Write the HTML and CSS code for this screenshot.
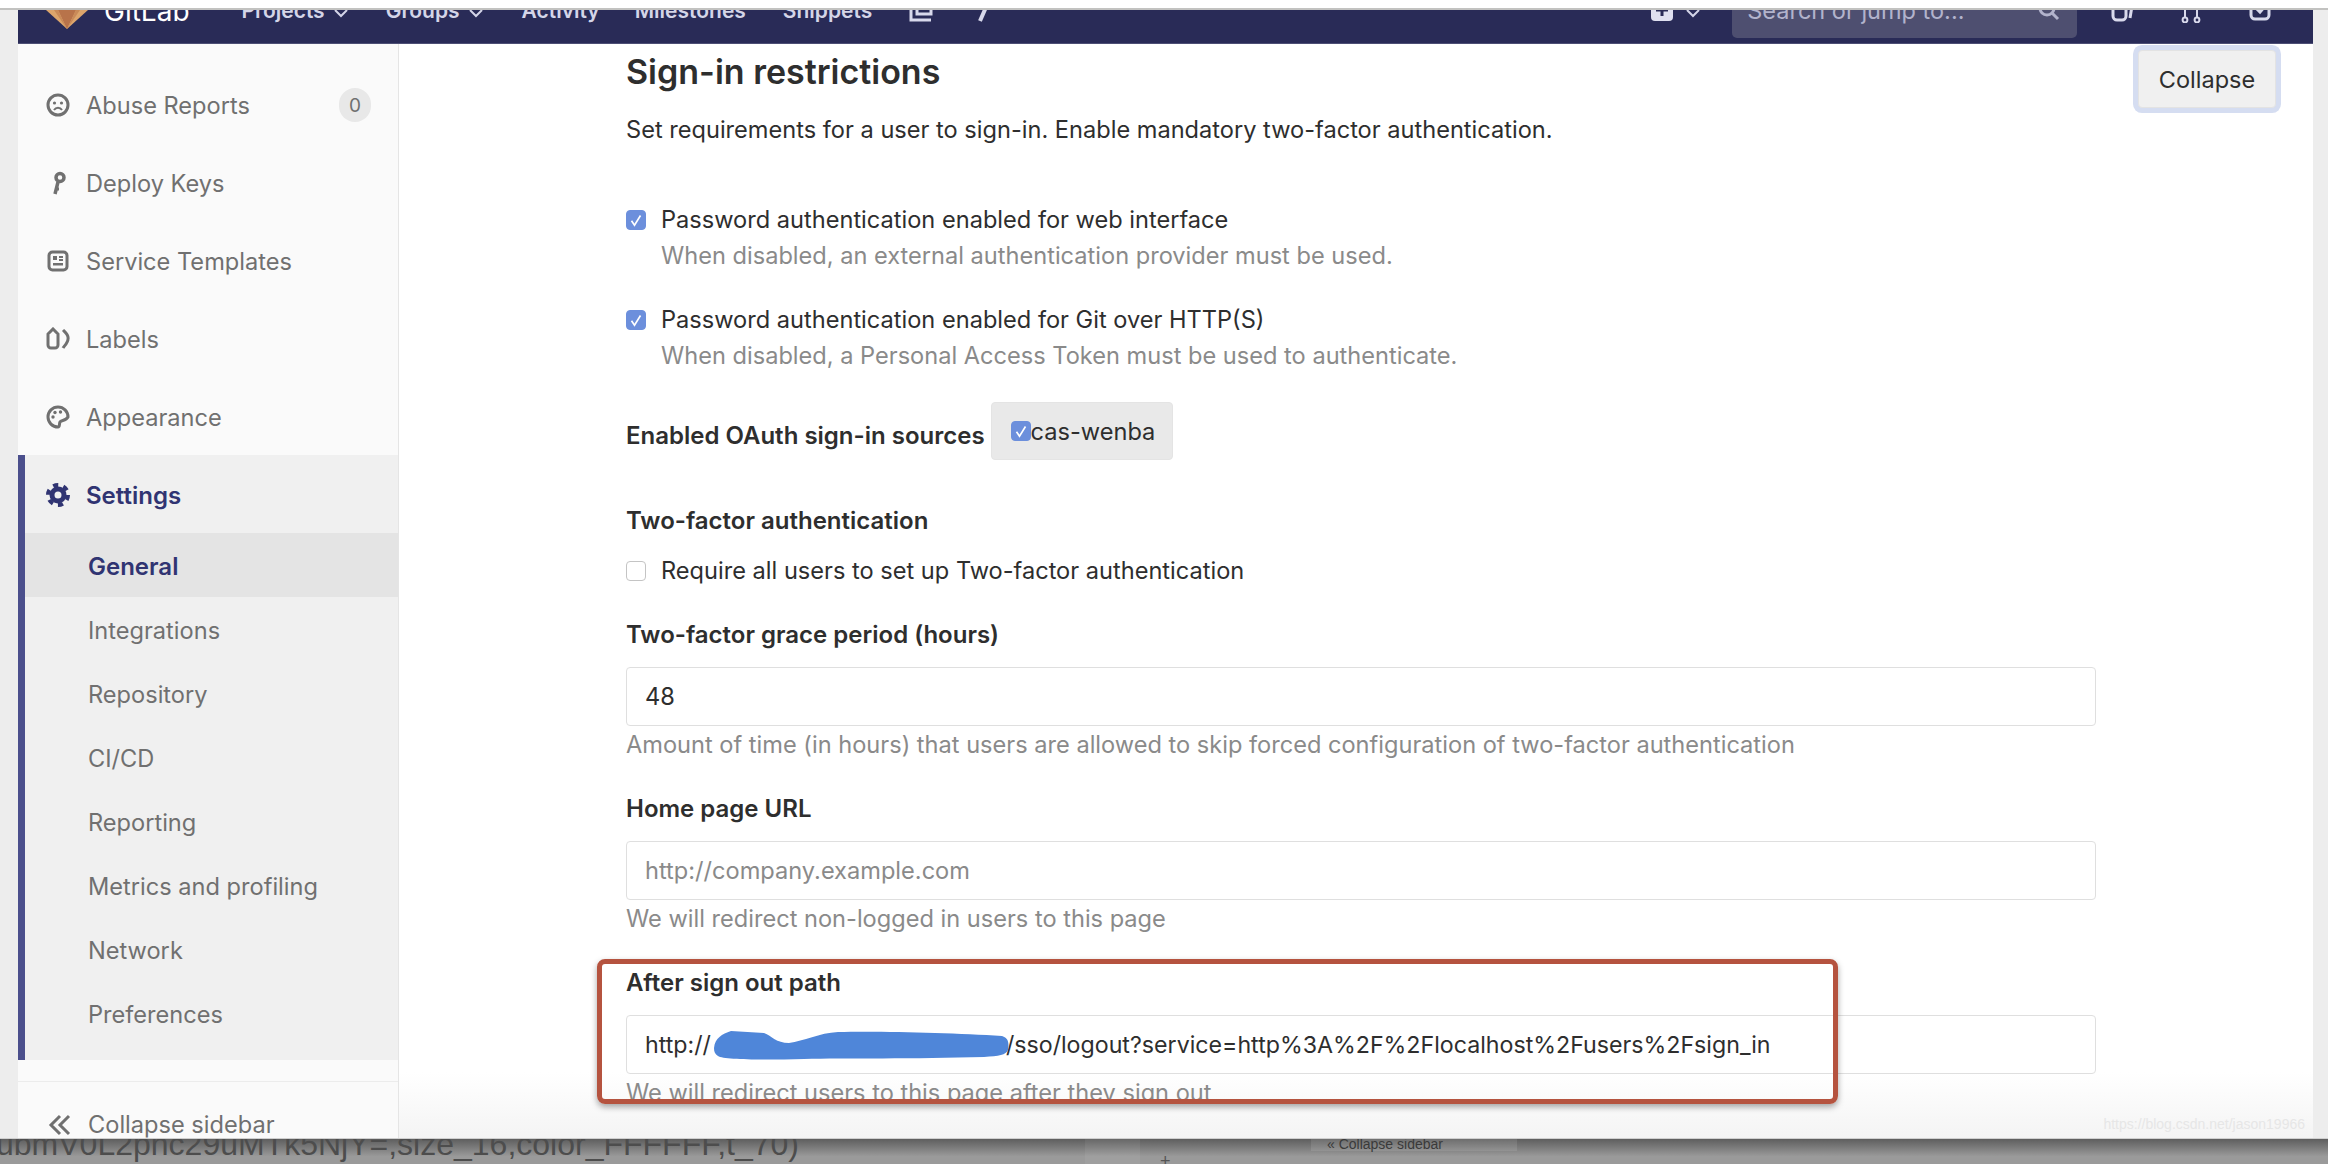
FILE: index.html
```html
<!DOCTYPE html>
<html lang="en">
<head>
    <meta charset="UTF-8">
    <title>Settings · Admin Area · GitLab</title>
    <link rel="stylesheet" href="styles.css">
</head>
<body>
    <div class="top-edge"></div>

    <div class="window">
        <nav class="navbar">
            <div class="nav-inner">
                <svg class="logo" viewBox="0 0 42 58"><path fill="#dca56c" d="M0 39 21 58 42 39V20H0z"/><path fill="#b8734a" d="M12 39 21 58 30 39V20H12z"/><path fill="#c98a58" d="M8 39 21 58 12 39V20H8zM34 39 21 58 30 39V20h4z"/></svg>
                <span class="brand">GitLab</span>
                <a class="nav-link projects">Projects <svg class="chev" viewBox="0 0 16 10"><path d="M2 2l6 6 6-6"/></svg></a>
                <a class="nav-link groups">Groups <svg class="chev" viewBox="0 0 16 10"><path d="M2 2l6 6 6-6"/></svg></a>
                <a class="nav-link activity">Activity</a>
                <a class="nav-link milestones">Milestones</a>
                <a class="nav-link snippets">Snippets</a>
                <svg class="nav-icon chart" viewBox="0 0 24 24"><path d="M2 2v20h20M8 2v14h14V2"/></svg>
                <svg class="nav-icon wrench" viewBox="0 0 16 28"><path d="M13 2 3 25"/></svg>
                <svg class="nav-icon plus" viewBox="0 0 22 22"><rect width="22" height="22" rx="4" fill="#dfe0f0" stroke="none"/><path stroke="#292b57" d="M11 5v12M5 11h12"/></svg>
                <svg class="chev chev-plus" viewBox="0 0 16 10"><path d="M2 2l6 6 6-6"/></svg>
                <div class="search">
                    <span>Search or jump to...</span>
                    <svg class="search-icon" viewBox="0 0 22 22"><circle cx="9" cy="9" r="7"/><path d="M14 14l6 6"/></svg>
                </div>
                <svg class="nav-icon issues" viewBox="0 0 24 24"><path d="M3 2v16a4 4 0 0 0 4 4h5a4 4 0 0 0 4-4V2M20 20l3-18"/></svg>
                <svg class="nav-icon merge" viewBox="0 0 20 26"><path d="M4 2v18M16 2v18"/><circle cx="4" cy="23" r="2.4"/><circle cx="16" cy="23" r="2.4"/></svg>
                <svg class="nav-icon todo" viewBox="0 0 22 22"><path d="M2 2v14a4 4 0 0 0 4 4h10a4 4 0 0 0 4-4V2M7 9l4 4 7-8"/></svg>
            </div>
        </nav>

        <div class="layout">
            <aside class="sidebar">
                <ul class="side-list">
                    <li class="side-item">
                        <svg class="side-icon" viewBox="0 0 24 24"><circle cx="12" cy="12" r="10" fill="none" stroke="#707070" stroke-width="3"/><circle cx="8.5" cy="10" r="1.6"/><circle cx="15.5" cy="10" r="1.6"/><path d="M8 17c2-3 6-3 8 0" fill="none" stroke="#707070" stroke-width="2"/></svg>
                        Abuse Reports
                        <span class="badge">0</span>
                    </li>
                    <li class="side-item">
                        <svg class="side-icon" viewBox="0 0 24 24"><path fill="none" stroke="#707070" stroke-width="3.5" d="M9 23l3-12"/><path fill="none" stroke="#707070" stroke-width="3" d="M9 18h4"/><circle cx="14" cy="6.5" r="4" fill="none" stroke="#707070" stroke-width="3.5"/></svg>
                        Deploy Keys
                    </li>
                    <li class="side-item">
                        <svg class="side-icon" viewBox="0 0 24 24"><rect x="3" y="3" width="18" height="18" rx="3.5" fill="none" stroke="#707070" stroke-width="3"/><rect x="7" y="7" width="4" height="4"/><rect x="13" y="7" width="4" height="2"/><rect x="13" y="10" width="4" height="2"/><rect x="7" y="14" width="10" height="2.5"/></svg>
                        Service Templates
                    </li>
                    <li class="side-item">
                        <svg class="side-icon" viewBox="0 0 24 24"><path fill="none" stroke="#707070" stroke-width="3" d="M2 7l5-5 5 5v11a3 3 0 0 1-3 3H5a3 3 0 0 1-3-3zM17 3c2 2 6 5 5 9 0 4-4 7-5 9"/></svg>
                        Labels
                    </li>
                    <li class="side-item">
                        <svg class="side-icon" viewBox="0 0 24 24"><path fill="none" stroke="#707070" stroke-width="3" d="M22 12A10 10 0 1 0 12 22c2 0 1-3 2-5s6-1 8-5z"/><circle cx="7" cy="12" r="1.7"/><circle cx="9" cy="7.5" r="1.7"/><circle cx="14.5" cy="7" r="1.7"/></svg>
                        Appearance
                    </li>
                </ul>
                <div class="side-active">
                    <div class="side-item side-head">
                        <svg class="side-icon gear" viewBox="0 0 24 24"><circle cx="12" cy="12" r="6" fill="none" stroke="#303472" stroke-width="5"/><circle cx="12" cy="12" r="10" fill="none" stroke="#303472" stroke-width="4" stroke-dasharray="5.2 5.27"/></svg>
                        Settings
                    </div>
                    <a class="sub-item current">General</a>
                    <a class="sub-item">Integrations</a>
                    <a class="sub-item">Repository</a>
                    <a class="sub-item">CI/CD</a>
                    <a class="sub-item">Reporting</a>
                    <a class="sub-item">Metrics and profiling</a>
                    <a class="sub-item">Network</a>
                    <a class="sub-item">Preferences</a>
                </div>
                <div class="side-collapse">
                    <svg class="collapse-icon" viewBox="0 0 24 24"><path d="M12 3 3 12l9 9M21 3l-9 9 9 9"/></svg>
                    Collapse sidebar
                </div>
            </aside>

            <main class="content">
                <div class="section-head">
                    <h2>Sign-in restrictions</h2>
                    <button class="btn-collapse" type="button">Collapse</button>
                </div>
                <p class="section-desc">Set requirements for a user to sign-in. Enable mandatory two-factor authentication.</p>

                <div class="form-col">
                    <div class="check-row first">
                        <span class="check on"><svg viewBox="0 0 12 12"><path d="M3 6.5 5 9.5 9 3"/></svg></span>
                        Password authentication enabled for web interface
                    </div>
                    <p class="help indent">When disabled, an external authentication provider must be used.</p>

                    <div class="check-row spaced">
                        <span class="check on"><svg viewBox="0 0 12 12"><path d="M3 6.5 5 9.5 9 3"/></svg></span>
                        Password authentication enabled for Git over HTTP(S)
                    </div>
                    <p class="help indent">When disabled, a Personal Access Token must be used to authenticate.</p>

                    <div class="oauth-row">
                        <label class="field-label">Enabled OAuth sign-in sources</label>
                        <div class="chip">
                            <span class="check on"><svg viewBox="0 0 12 12"><path d="M3 6.5 5 9.5 9 3"/></svg></span>cas-wenba
                        </div>
                    </div>

                    <label class="field-label block after-oauth">Two-factor authentication</label>
                    <div class="check-row tight">
                        <span class="check"></span>
                        Require all users to set up Two-factor authentication
                    </div>

                    <label class="field-label block spaced">Two-factor grace period (hours)</label>
                    <div class="text-input">48</div>
                    <p class="help below-input">Amount of time (in hours) that users are allowed to skip forced configuration of two-factor authentication</p>

                    <label class="field-label block spaced">Home page URL</label>
                    <div class="text-input placeholder">http://company.example.com</div>
                    <p class="help below-input">We will redirect non-logged in users to this page</p>

                    <label class="field-label block spaced">After sign out path</label>
                    <div class="text-input signout">
                        <span>http://</span><span class="masked"></span><span>/sso/logout?service=http%3A%2F%2Flocalhost%2Fusers%2Fsign_in</span>
                        <svg class="scribble" viewBox="0 0 295 30"><path fill="#4f86d9" d="M0 18C1 8 8 4 17 1L50 3C58 6 62 13 75 13C90 11 105 3 124 2C170 1 240 3 288 6C295 8 295 14 294 20C292 25 285 26 270 27C200 29 130 28 90 29C50 30 10 30 4 26C1 24 0 22 0 18z"/></svg>
                    </div>
                    <p class="help below-input cut">We will redirect users to this page after they sign out</p>
                </div>
                <span class="watermark">https://blog.csdn.net/jason19966</span>
            </main>
        </div>
    </div>

    <div class="desk">
        <span class="desk-url">ubmV0L2pnc29uMTk5NjY=,size_16,color_FFFFFF,t_70)</span>
        <span class="desk-band"></span>
        <span class="desk-plus">+</span>
        <span class="desk-patch">« Collapse sidebar</span>
    </div>

    <div class="annotation"></div>
</body>
</html>
```

FILE: styles.css
```css
* {
    box-sizing: border-box;
}

html, body {
    margin: 0;
    padding: 0;
}

body {
    position: relative;
    width: 2328px;
    height: 1164px;
    overflow: hidden;
    display: flex;
    flex-direction: column;
    font-family: Inter, "Noto Sans", sans-serif;
    font-size: 23.6px;
    color: #2e2e2e;
    background-color: #ededed;
}

.top-edge {
    height: 10px;
    flex-shrink: 0;
    background-color: #fff;
    border-bottom: 2px solid #c2c2c0;
}

/* the browser window, cut off by the screen capture */
.window {
    flex: 1;
    min-height: 0;
    margin-left: 18px;
    margin-right: 15px;
    display: flex;
    flex-direction: column;
    background-color: #fff;
}

.navbar {
    height: 34px;
    flex-shrink: 0;
    overflow: hidden;
    background-color: #292b57;
    border-bottom: 1px solid #4d4f75;
}

.nav-inner {
    height: 48px;
    margin-top: -24px;
    display: flex;
    align-items: center;
    color: #d4d5e8;
    padding-left: 28px;
}

.logo {
    width: 42px;
    height: 58px;
    flex-shrink: 0;
    margin-top: -20px;
}

.brand {
    font-size: 28px;
    color: #fff;
    margin-left: 16px;
    margin-top: 2px;
}

.nav-link {
    font-size: 21px;
    font-weight: 600;
    white-space: nowrap;
    display: flex;
    align-items: center;
}

.projects { margin-left: 52px; }
.groups { margin-left: 37px; }
.activity { margin-left: 38px; }
.milestones { margin-left: 35px; }
.snippets { margin-left: 37px; }

.chev {
    width: 16px;
    height: 10px;
    margin-left: 8px;
    margin-top: 6px;
    fill: none;
    stroke: #d4d5e8;
    stroke-width: 2;
}

.nav-icon {
    flex-shrink: 0;
    fill: none;
    stroke: #d8d9ec;
    stroke-width: 3;
}

.chart {
    width: 24px;
    height: 24px;
    margin-left: 37px;
}

.wrench {
    width: 16px;
    height: 28px;
    margin-left: 44px;
    stroke-width: 4;
}

.plus {
    width: 22px;
    height: 22px;
    margin-left: 658px;
}

.chev-plus {
    margin-left: 12px;
}

.search {
    width: 345px;
    height: 56px;
    flex-shrink: 0;
    margin-left: 31px;
    padding: 0 17px 0 15px;
    display: flex;
    align-items: center;
    justify-content: space-between;
    font-size: 23.5px;
    color: #b2b3cc;
    background-color: #4e4f70;
    border-radius: 5px;
}

.search-icon {
    width: 22px;
    height: 22px;
    fill: none;
    stroke: #b2b3cc;
    stroke-width: 3;
}

.issues {
    width: 24px;
    height: 24px;
    margin-left: 33px;
}

.merge {
    width: 20px;
    height: 26px;
    margin-left: 47px;
    stroke-width: 2;
}

.todo {
    width: 22px;
    height: 22px;
    margin-left: 48px;
}

.layout {
    flex: 1;
    min-height: 0;
    display: flex;
}

/* sidebar */
.sidebar {
    width: 381px;
    flex-shrink: 0;
    overflow: hidden;
    background-color: #fafafa;
    border-right: 1px solid #e5e5e5;
    color: #707070;
}

.side-list {
    list-style: none;
    margin: 0;
    padding: 21px 0 0;
}

.side-item {
    height: 78px;
    display: flex;
    align-items: center;
    padding-left: 28px;
    padding-top: 2px;
}

.side-icon {
    width: 24px;
    height: 24px;
    margin-right: 16px;
    flex-shrink: 0;
    fill: #707070;
}

.badge {
    width: 32px;
    height: 34px;
    margin-left: auto;
    margin-right: 27px;
    border-radius: 16px;
    display: flex;
    align-items: center;
    justify-content: center;
    font-size: 19px;
    background-color: #e8e8e8;
}

.side-active {
    padding-bottom: 15px;
    background-color: #f0f0f0;
    border-left: 7px solid #4b4f8c;
}

.side-head {
    padding-left: 21px;
    font-size: 24px;
    color: #303472;
    font-weight: 600;
}

.sub-item {
    height: 64px;
    display: flex;
    align-items: center;
    padding-left: 63px;
    padding-top: 2px;
}

.current {
    font-size: 24px;
    color: #303472;
    font-weight: 600;
    background-color: #e4e4e4;
}

.side-collapse {
    margin-top: 21px;
    height: 86px;
    padding-left: 30px;
    display: flex;
    align-items: center;
    border-top: 1px solid #ececec;
}

.collapse-icon {
    width: 24px;
    height: 24px;
    margin-right: 16px;
    fill: none;
    stroke: #707070;
    stroke-width: 3;
}

/* main column */
.content {
    flex: 1;
    position: relative;
    overflow: hidden;
    padding: 6px 37px 0 227px;
    background: linear-gradient(#fff 94%, #f4f4f4);
}

.section-head {
    height: 58px;
    display: flex;
    justify-content: space-between;
    align-items: flex-start;
}

h2 {
    margin: 0;
    font-size: 34px;
    font-weight: 600;
    line-height: 44px;
}

.btn-collapse {
    width: 138px;
    height: 58px;
    font-family: inherit;
    font-size: 23.5px;
    color: #2e2e2e;
    background-color: #f0f0f0;
    border: 1px solid #e3e3e3;
    border-radius: 4px;
    box-shadow: 0 0 0 5px #d5ddf1;
}

p {
    margin: 0;
    line-height: 36px;
}

.section-desc {
    margin-top: 4px;
}

.form-col {
    width: 1470px;
}

.check-row {
    display: flex;
    align-items: center;
    line-height: 36px;
}

.first { margin-top: 54px; }
.spaced { margin-top: 28px; }
.tight { margin-top: 14px; }

.check {
    width: 20px;
    height: 20px;
    flex-shrink: 0;
    margin-right: 15px;
    border: 1px solid #c4c4c4;
    border-radius: 4px;
    background-color: #fff;
}

.check.on {
    background-color: #6c8fdc;
    border-color: #6c8fdc;
}

.check svg {
    display: block;
    width: 18px;
    height: 18px;
    fill: none;
    stroke: #fff;
    stroke-width: 1.1;
}

.help {
    color: #8a8a8a;
    white-space: nowrap;
}

.indent {
    padding-left: 35px;
}

.below-input {
    margin-top: 1px;
}

.field-label {
    font-size: 24px;
    font-weight: 600;
    line-height: 36px;
    white-space: nowrap;
}

.block {
    display: block;
}

.oauth-row {
    margin-top: 28px;
    display: flex;
    align-items: flex-end;
    gap: 6px;
}

.oauth-row .field-label {
    padding-bottom: 6px;
}

.chip {
    width: 182px;
    height: 58px;
    padding-left: 19px;
    display: flex;
    align-items: center;
    background-color: #e9e9e9;
    border: 1px solid #e4e4e4;
    border-radius: 4px;
}

.chip .check {
    margin-right: 0;
}

.after-oauth {
    margin-top: 43px;
}

.text-input {
    position: relative;
    height: 59px;
    margin-top: 14px;
    padding-left: 18px;
    display: flex;
    align-items: center;
    white-space: nowrap;
    background-color: #fff;
    border: 1px solid #dfdfdf;
    border-radius: 4px;
}

.placeholder {
    color: #8a8a8a;
}

.signout {
    font-size: 23.2px;
}

.masked {
    width: 295px;
    flex-shrink: 0;
}

.scribble {
    position: absolute;
    left: 87px;
    top: 14px;
    width: 295px;
    height: 30px;
}

.cut {
    height: 27px;
    overflow: hidden;
}

.watermark {
    position: absolute;
    right: 8px;
    bottom: 6px;
    font-family: "Liberation Sans", sans-serif;
    font-size: 14px;
    color: #e6e6e6;
}

/* desktop visible under the window */
.desk {
    position: relative;
    height: 26px;
    flex-shrink: 0;
    overflow: hidden;
    background: linear-gradient(#5e5e5e, #9a9a9a 70%);
    border-top: 1px solid #cfcfcf;
}

.desk-url {
    position: absolute;
    left: -4px;
    top: -15px;
    font-family: "Liberation Sans", sans-serif;
    font-size: 32px;
    line-height: 40px;
    white-space: nowrap;
    color: #4d4d4d;
}

.desk-band {
    position: absolute;
    left: 1085px;
    top: 0;
    width: 55px;
    height: 26px;
    background-color: rgba(255, 255, 255, 0.06);
}

.desk-plus {
    position: absolute;
    left: 1160px;
    top: 12px;
    font-family: "Liberation Sans", sans-serif;
    font-size: 18px;
    line-height: 20px;
    color: #555;
}

.desk-patch {
    position: absolute;
    left: 1311px;
    top: 0;
    width: 206px;
    height: 12px;
    padding-left: 16px;
    font-family: "Liberation Sans", sans-serif;
    font-size: 14px;
    line-height: 10px;
    color: #3a3a3a;
    background-color: rgba(255, 255, 255, 0.1);
}

/* red box drawn on the screenshot */
.annotation {
    position: absolute;
    left: 597px;
    top: 959px;
    width: 1241px;
    height: 145px;
    border: 5px solid #b5533f;
    border-radius: 8px;
    box-shadow: 0 3px 6px rgba(0, 0, 0, 0.35);
}
```
